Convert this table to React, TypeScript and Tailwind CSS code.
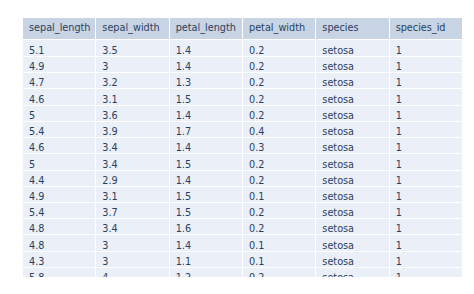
import React from 'react';

const columns = ['sepal_length', 'sepal_width', 'petal_length', 'petal_width', 'species', 'species_id'];

const rows: (string | number)[][] = [
  [5.1, 3.5, 1.4, 0.2],
  [4.9, 3, 1.4, 0.2],
  [4.7, 3.2, 1.3, 0.2],
  [4.6, 3.1, 1.5, 0.2],
  [5, 3.6, 1.4, 0.2],
  [5.4, 3.9, 1.7, 0.4],
  [4.6, 3.4, 1.4, 0.3],
  [5, 3.4, 1.5, 0.2],
  [4.4, 2.9, 1.4, 0.2],
  [4.9, 3.1, 1.5, 0.1],
  [5.4, 3.7, 1.5, 0.2],
  [4.8, 3.4, 1.6, 0.2],
  [4.8, 3, 1.4, 0.1],
  [4.3, 3, 1.1, 0.1],
  [5.8, 4, 1.2, 0.2],
].map((r) => [...r, 'setosa', 1]);

export default function App() {
  return (
    <div className="w-[474px] h-[294px] bg-white pt-[18px] pl-[23px] font-['DejaVu_Sans',Verdana,sans-serif] text-[9.7px] text-[#2a3f5f]">
      <div className="w-[440px] h-[259px] overflow-hidden">
        {/* Header */}
        <div className="grid grid-cols-6 h-[22px] bg-[#c8d4e3]">
          {columns.map((col) => (
            <div key={col} className="border-r border-b border-white pl-[6px] pt-[4px] leading-[11px] whitespace-nowrap">
              {col}
            </div>
          ))}
        </div>

        {/* Body: last row is clipped by the container, as in the source */}
        {rows.map((row, i) => (
          <div key={i} className="grid grid-cols-6 h-[16.23px] bg-[#ebf0f8]">
            {row.map((val, j) => (
              <div key={j} className="border-r border-b border-white pl-[6px] pt-[5px] leading-[11px] whitespace-nowrap">
                {val}
              </div>
            ))}
          </div>
        ))}
      </div>
    </div>
  );
}
